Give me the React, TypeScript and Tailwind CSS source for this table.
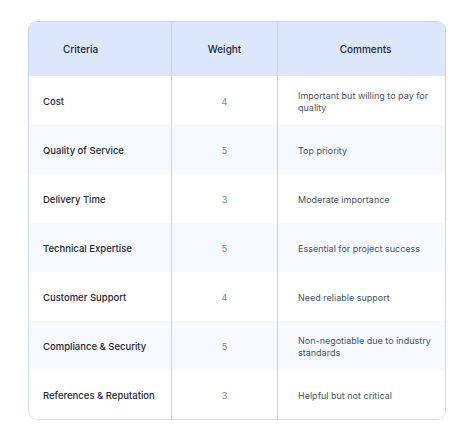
import React from 'react';

const rows = [
  { criteria: 'Cost', weight: 4, comment: 'Important but willing to pay for quality' },
  { criteria: 'Quality of Service', weight: 5, comment: 'Top priority' },
  { criteria: 'Delivery Time', weight: 3, comment: 'Moderate importance' },
  { criteria: 'Technical Expertise', weight: 5, comment: 'Essential for project success' },
  { criteria: 'Customer Support', weight: 4, comment: 'Need reliable support' },
  { criteria: 'Compliance & Security', weight: 5, comment: 'Non-negotiable due to industry standards' },
  { criteria: 'References & Reputation', weight: 3, comment: 'Helpful but not critical' },
];

export default function App() {
  return (
    <div
      className="w-[474px] h-[442px] bg-white pt-[21px] pl-[28px]"
      style={{ fontFamily: 'Inter, "Noto Sans", sans-serif' }}
    >
      {/* Outer border with blue → teal gradient */}
      <div className="w-[418px] rounded-[9px] bg-gradient-to-b from-[#c3d2f5] to-[#c9e8e4] p-px">
        <div className="rounded-[8px] overflow-hidden bg-white">
          {/* Header */}
          <div className="flex h-[54px] pt-px bg-[#dce6fc] text-[10px] font-medium text-[#1f2937]">
            <div className="w-[143px] border-r border-[#c8d5ef] flex items-center pl-[34px]">Criteria</div>
            <div className="w-[106px] border-r border-[#c8d5ef] flex items-center justify-center">Weight</div>
            <div className="flex-1 flex items-center justify-center pl-[8px]">Comments</div>
          </div>

          {/* Body */}
          {rows.map((r, i) => (
            <div
              key={r.criteria}
              className={`flex h-[49px] ${i % 2 === 1 ? 'bg-[#f6f9fd]' : 'bg-white'}`}
            >
              <div className="w-[143px] border-r border-[#c8d5ef] flex items-center pt-[3px] pl-[14px] text-[9.5px] font-medium text-[#1f2937]">
                {r.criteria}
              </div>
              <div className="w-[106px] border-r border-[#c8d5ef] flex items-center justify-center pt-[3px] text-[9px] text-[#80858f]">
                {r.weight}
              </div>
              <div className="flex-1 flex items-center pt-[3px] pl-[20px] pr-[6px] text-[9px] leading-[12px] text-[#4b5563]">
                {r.comment}
              </div>
            </div>
          ))}
        </div>
      </div>
    </div>
  );
}
